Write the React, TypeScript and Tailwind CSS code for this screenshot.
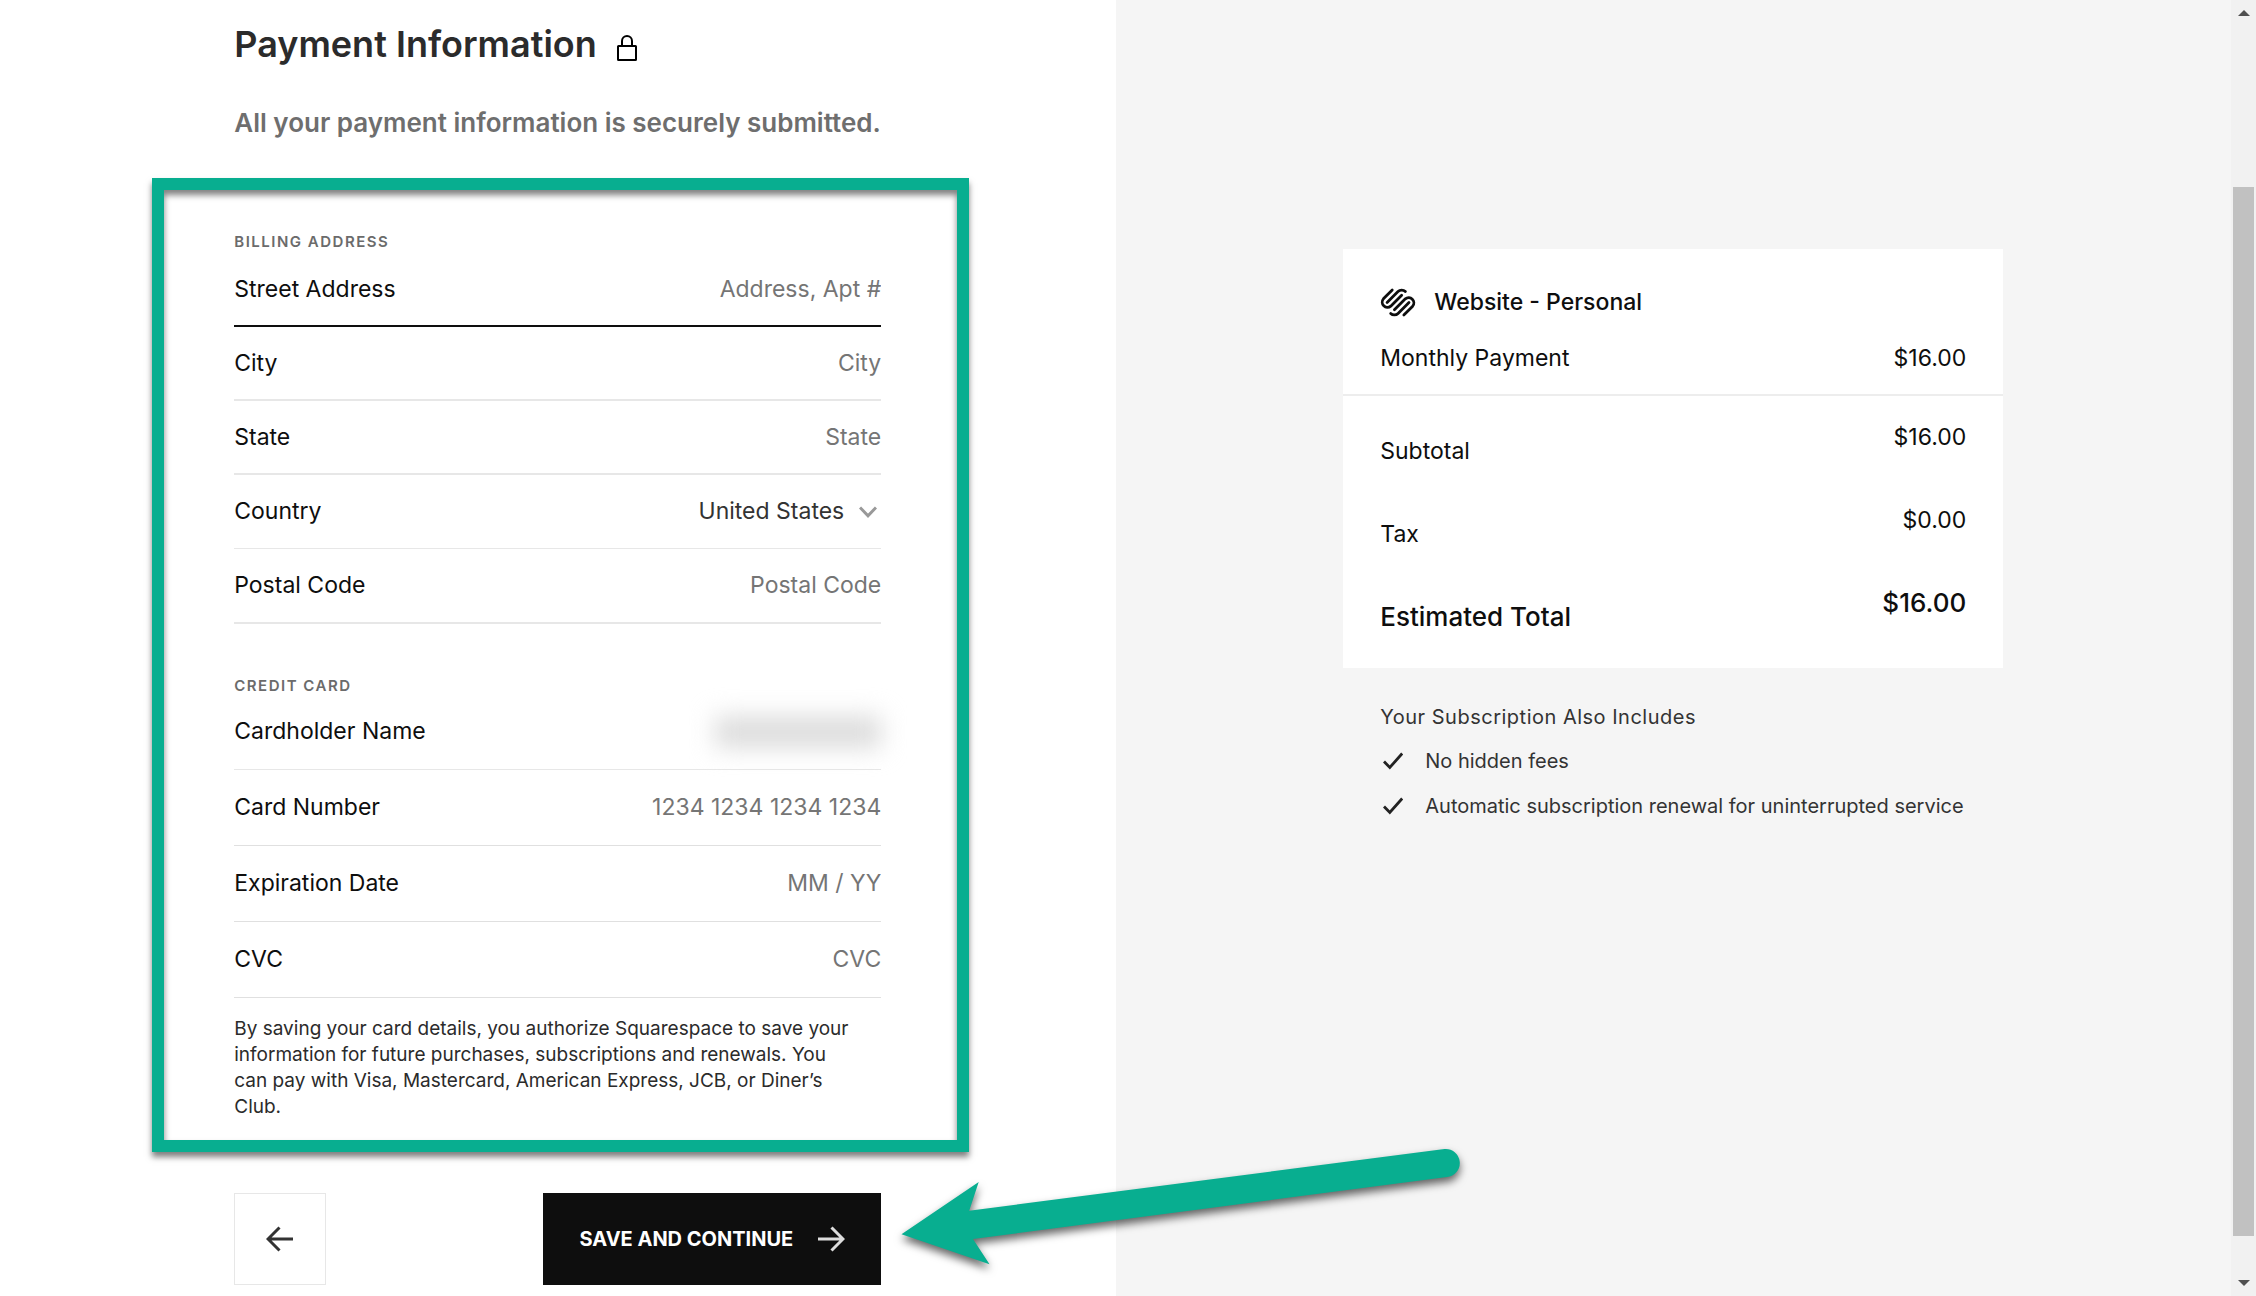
import React from 'react';
import clsx from 'clsx';

interface Field {
  id: string;
  label: string;
  placeholder: string;
  active?: boolean;
}

const addressFields: Field[] = [
  { id: 'street', label: 'Street Address', placeholder: 'Address, Apt #', active: true },
  { id: 'city', label: 'City', placeholder: 'City' },
  { id: 'state', label: 'State', placeholder: 'State' },
];

const cardFields: Field[] = [
  { id: 'card-number', label: 'Card Number', placeholder: '1234 1234 1234 1234' },
  { id: 'expiration', label: 'Expiration Date', placeholder: 'MM / YY' },
  { id: 'cvc', label: 'CVC', placeholder: 'CVC' },
];

const totals = [
  { label: 'Subtotal', amount: '$16.00' },
  { label: 'Tax', amount: '$0.00' },
  { label: 'Estimated Total', amount: '$16.00', strong: true },
];

const perks = ['No hidden fees', 'Automatic subscription renewal for uninterrupted service'];

const inputClass =
  'min-w-0 flex-1 bg-transparent text-right text-[#333] placeholder:text-[#757575] outline-none';

interface RowProps {
  id: string;
  label: string;
  className?: string;
  children: React.ReactNode;
}

const Row: React.FC<RowProps> = ({ id, label, className, children }) => (
  <div className={clsx('flex items-center justify-between text-[23px]', className)}>
    <label htmlFor={id} className="text-[#0e0e0e]">
      {label}
    </label>
    {children}
  </div>
);

const SectionLabel: React.FC<{ children: React.ReactNode }> = ({ children }) => (
  <h2 className="text-[15px] leading-4 font-semibold tracking-widest text-[#6b6b6b] uppercase">{children}</h2>
);

const LockIcon: React.FC = () => (
  <svg className="h-7 w-5" viewBox="0 0 20 28" fill="none" stroke="#000" strokeWidth="2" aria-hidden="true">
    <rect x="1" y="12" width="18" height="14" rx="0.5" />
    <path d="M5 12V7a5 5 0 0 1 10 0v5" />
  </svg>
);

const ArrowIcon: React.FC<{ className?: string }> = ({ className }) => (
  <svg
    className={clsx('h-7 w-7', className)}
    viewBox="0 0 28 28"
    fill="none"
    stroke="currentColor"
    strokeWidth="3"
    aria-hidden="true"
  >
    <path d="M1 14h25M14.5 2.5 26 14 14.5 25.5" />
  </svg>
);

const CheckIcon: React.FC = () => (
  <svg className="h-5 w-5" viewBox="0 0 20 20" fill="none" stroke="#222" strokeWidth="2.8" aria-hidden="true">
    <path d="M1 10.5 6.8 16.5 19.2 2.5" />
  </svg>
);

const SquarespaceLogo: React.FC = () => (
  <svg
    className="h-[29px] w-9"
    viewBox="8 58 492 393"
    fill="none"
    stroke="#0e0e0e"
    strokeWidth="38"
    strokeLinecap="round"
    aria-hidden="true"
  >
    <path d="M175 84 55 204A71 71 0 0 0 155 304L304 154" />
    <path d="M355 105A71 71 0 0 0 254 105L105 254" />
    <path d="M334 425 454 305A71 71 0 0 0 354 205L205 355" />
    <path d="M154 404A71 71 0 0 0 255 404L404 255" />
  </svg>
);

const PaymentForm: React.FC = () => (
  <form className="mx-auto w-full max-w-[647px] pt-[22px] pb-3" onSubmit={(e) => e.preventDefault()}>
    <div className="flex items-center gap-5">
      <h1 className="text-[36px] leading-[44px] font-semibold text-[#2b2b2b]">Payment Information</h1>
      <div className="pt-2">
        <LockIcon />
      </div>
    </div>
    <p className="mt-[41px] text-[26px] leading-8 font-semibold text-[#6e6e6e]">
      All your payment information is securely submitted.
    </p>

    <div className="mt-[39px] -mr-[88px] -ml-[82px] border-12 border-[#08ae90] pt-[44px] pr-[76px] pb-5 pl-[70px] shadow-[0_5px_6px_rgba(0,0,0,0.5),inset_0_5px_6px_rgba(0,0,0,0.5)]">
      <section>
        <SectionLabel>Billing Address</SectionLabel>
        <div className="mt-[3px]">
          {addressFields.map((f) => (
            <Row
              key={f.id}
              id={f.id}
              label={f.label}
              className={clsx('h-[74px] border-b-2', f.active ? 'border-[#0e0e0e]' : 'border-[#e7e7e7]')}
            >
              <input id={f.id} placeholder={f.placeholder} className={inputClass} />
            </Row>
          ))}
          <Row id="country" label="Country" className="h-[74px] border-b border-[#e7e7e7]">
            <div className="flex items-center gap-[15px] pr-1">
              <select id="country" className="appearance-none bg-transparent text-right text-[#333] outline-none">
                <option>United States</option>
              </select>
              <svg className="h-3 w-[18px]" viewBox="0 0 18 12" fill="none" stroke="#999" strokeWidth="3" aria-hidden="true">
                <path d="M1 1.5 9 9.8 17 1.5" />
              </svg>
            </div>
          </Row>
          <Row id="postal" label="Postal Code" className="h-[75px] border-b-2 border-[#e7e7e7]">
            <input id="postal" placeholder="Postal Code" className={inputClass} />
          </Row>
        </div>
      </section>

      <section className="mt-[54px]">
        <SectionLabel>Credit Card</SectionLabel>
        <Row id="cardholder" label="Cardholder Name" className="h-[76px] border-b border-[#e7e7e7]">
          {/* value is hidden behind a smudge */}
          <input id="cardholder" className="h-8 w-[166px] bg-[#dcdcdc] blur-[12px] outline-none" />
        </Row>
        {cardFields.map((f) => (
          <Row key={f.id} id={f.id} label={f.label} className="h-[76px] border-b border-[#e0e0e0]">
            <input id={f.id} placeholder={f.placeholder} className={inputClass} />
          </Row>
        ))}
        <p className="mt-[18px] pr-6 text-[19px] leading-[26px] text-[#2b2b2b]">
          By saving your card details, you authorize Squarespace to save your information for future purchases,
          subscriptions and renewals. You can pay with Visa, Mastercard, American Express, JCB, or Diner’s Club.
        </p>
      </section>
    </div>

    <div className="mt-[41px] flex justify-between">
      <button
        type="button"
        aria-label="Back"
        className="flex size-[92px] items-center justify-center border border-[#e7e7e7] text-[#333]"
      >
        <ArrowIcon className="rotate-180" />
      </button>
      <button
        type="submit"
        className="flex h-[92px] items-center gap-6 bg-[#0e0e0e] px-9 text-[20px] font-bold text-white"
      >
        SAVE AND CONTINUE
        <ArrowIcon className="text-[#ddd]" />
      </button>
    </div>
  </form>
);

const Summary: React.FC = () => (
  <div className="mx-auto w-full max-w-[660px] pt-[249px] text-[23px] text-[#0e0e0e]">
    <div className="bg-white">
      <div className="border-b-2 border-[#ededed] px-[37px] pt-[37px] pb-5">
        <div className="flex items-center gap-[18px]">
          <SquarespaceLogo />
          <h2 className="leading-8 font-medium">Website - Personal</h2>
        </div>
        <div className="mt-6 flex justify-between leading-8">
          <span>Monthly Payment</span>
          <span>$16.00</span>
        </div>
      </div>
      <div className="flex flex-col gap-[37px] px-[37px] pt-[25px] pb-[35px]">
        {totals.map((t) => (
          <div
            key={t.label}
            className={clsx('flex items-start justify-between leading-8', {
              'text-[26px] font-medium': t.strong,
            })}
          >
            <span className="pt-[14px]">{t.label}</span>
            <span>{t.amount}</span>
          </div>
        ))}
      </div>
    </div>

    <div className="px-[37px] pt-[33px] text-[20px] text-[#333]">
      <h3 className="leading-8 tracking-wide">Your Subscription Also Includes</h3>
      <ul className="mt-3 flex flex-col gap-[13px]">
        {perks.map((perk) => (
          <li key={perk} className="flex items-center gap-[22px] pl-[3px] leading-8">
            <CheckIcon />
            {perk}
          </li>
        ))}
      </ul>
    </div>
  </div>
);

const Scrollbar: React.FC = () => (
  <div className="sticky top-0 flex h-screen w-[25px] flex-none flex-col items-center bg-[#f1f1f1]">
    <svg className="h-6 w-3 flex-none" viewBox="0 0 12 24" fill="#505050" aria-hidden="true">
      <path d="M0 16 6 10l6 6z" />
    </svg>
    <div className="grow-[163]" />
    <div className="w-[21px] grow-[1049] bg-[#c1c1c1]" />
    <div className="grow-[36]" />
    <svg className="h-6 w-3 flex-none" viewBox="0 0 12 24" fill="#505050" aria-hidden="true">
      <path d="M0 8l6 6 6-6z" />
    </svg>
  </div>
);

// Callout arrow pointing at the submit button
const Pointer: React.FC = () => (
  <svg
    className="pointer-events-none absolute top-[1140px] left-[890px] h-[150px] w-[590px] drop-shadow-[0_5px_4px_rgba(0,0,0,0.6)]"
    viewBox="890 1140 590 150"
    fill="#08ae90"
    aria-hidden="true"
  >
    <path d="M901.5 1234.3 978.7 1182 969.2 1210.7 1444.5 1149A14 14 0 0 1 1447 1177L973 1239 989.5 1264.3Z" />
  </svg>
);

const App: React.FC = () => (
  <div className="relative flex min-h-screen bg-white font-[Inter,'Liberation_Sans',sans-serif]">
    <main className="min-w-0 flex-1">
      <PaymentForm />
    </main>
    <aside className="min-w-0 flex-1 bg-[#f5f5f5]">
      <Summary />
    </aside>
    <Scrollbar />
    <Pointer />
  </div>
);

export default App;
